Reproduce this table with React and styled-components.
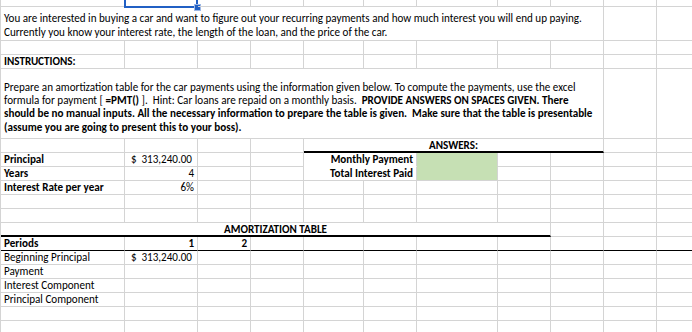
import React from "react";
import styled, { createGlobalStyle } from "styled-components";

const GRID = "#d4d4d4";
const GREEN = "#c6e0b4";
const BLUE = "#2160c4";

const Global = createGlobalStyle`
  html, body { margin: 0; padding: 0; background: #fff; overflow: hidden; }
  body { font-family: Carlito, Lato, "Liberation Sans", sans-serif; font-size: 11.1px; color: #000; }
`;

const Sheet = styled.div`
  display: grid;
  grid-template-columns: 124px 73px 53px 53px 60px 53px 81px 53px 53px 53px 53px;
  grid-template-rows: 7px 34px 14px 14px 70px repeat(14, 14px);
  width: max-content;
  border-left: 1px solid ${GRID};
`;

const bottomBorder = (p) => {
  if (p.$bottom === "thick") return "2px solid #000";
  if (p.$bottom === "thin") return "1px solid #000";
  if (p.$bottom === "hidden") return `1px solid ${p.$fill || "#fff"}`;
  return `1px solid ${GRID}`;
};

const Cell = styled.div`
  grid-column: span ${(p) => p.$span || 1};
  box-sizing: border-box;
  position: relative;
  min-width: 0;
  display: flex;
  align-items: ${(p) => (p.$valign === "center" ? "center" : "flex-end")};
  justify-content: ${(p) =>
    p.$align === "right" ? "flex-end" : p.$align === "center" ? "center" : "flex-start"};
  padding: ${(p) => p.$pad || "0 3px 0 3px"};
  border-right: 1px solid ${GRID};
  border-bottom: ${bottomBorder};
  background: ${(p) => p.$fill || "transparent"};
  font-weight: ${(p) => (p.$bold ? 700 : 400)};
  line-height: 13px;
  white-space: nowrap;
`;

const Para = styled.div`
  line-height: 13.3px;
  white-space: nowrap;
`;

const Strong = styled.span`
  font-weight: 700;
`;

const Money = styled.div`
  display: flex;
  justify-content: space-between;
  width: 100%;
  padding: 0 3px 0 3px;
`;

const Selection = styled.div`
  position: absolute;
  left: -1px;
  right: -1px;
  top: -12px;
  bottom: -2px;
  border: 2px solid ${BLUE};
  pointer-events: none;
`;

const Handle = styled.div`
  position: absolute;
  right: -5px;
  bottom: -5px;
  width: 5px;
  height: 5px;
  background: ${BLUE};
  border: 1px solid #9db8e6;
`;

const Dollar = ({ value }) => (
  <Money>
    <span>$</span>
    <span>{value}</span>
  </Money>
);

const rows = [
  // row 1 (partially visible)
  [{}, { selected: true }],
  // intro text
  [
    {
      span: 9,
      pad: "0 3px 1px 3px",
      content: (
        <Para>
          You are interested in buying a car and want to figure out your recurring payments and how
          much interest you will end up paying.
          <br />
          Currently you know your interest rate, the length of the loan, and the price of the car.
        </Para>
      ),
    },
  ],
  [],
  [{ bold: true, content: "INSTRUCTIONS:" }],
  [
    {
      span: 9,
      pad: "0 3px 4px 3px",
      content: (
        <Para>
          Prepare an amortization table for the car payments using the information given below. To
          compute the payments, use the excel
          <br />
          formula for payment [ <Strong>=PMT()</Strong> ].&nbsp; Hint: Car loans are repaid on a
          monthly basis.&nbsp; <Strong>PROVIDE ANSWERS ON SPACES GIVEN. There</Strong>
          <br />
          <Strong>
            should be no manual inputs. All the necessary information to prepare the table is
            given.&nbsp; Make sure that the table is presentable
          </Strong>
          <br />
          <Strong>(assume you are going to present this to your boss).</Strong>
        </Para>
      ),
    },
  ],
  [{}, {}, {}, {}, { span: 5, bold: true, align: "center", bottom: "thick", valign: "center", content: "ANSWERS:" }],
  [
    { bold: true, content: "Principal" },
    { pad: "0 2px 0 3px", content: <Dollar value="313,240.00" /> },
    {},
    {},
    { span: 2, bold: true, align: "right", bottom: "hidden", content: "Monthly Payment" },
    { fill: GREEN, bottom: "hidden" },
  ],
  [
    { bold: true, content: "Years" },
    { align: "right", content: "4" },
    {},
    {},
    { span: 2, bold: true, align: "right", content: "Total Interest Paid" },
    { fill: GREEN },
  ],
  [
    { bold: true, content: "Interest Rate per year" },
    { align: "right", content: "6%" },
  ],
  [],
  [],
  [{ span: 8, bold: true, align: "center", bottom: "thick", valign: "center", content: "AMORTIZATION TABLE" }],
  [
    { bold: true, bottom: "thin", content: "Periods" },
    { bold: true, bottom: "thin", align: "right", content: "1" },
    { bold: true, bottom: "thin", align: "right", content: "2" },
    ...Array.from({ length: 8 }, () => ({ bottom: "thin" })),
  ],
  [
    { content: "Beginning Principal" },
    { pad: "0 2px 0 3px", content: <Dollar value="313,240.00" /> },
  ],
  [{ content: "Payment" }],
  [{ content: "Interest Component" }],
  [{ content: "Principal Component" }],
  [],
  [],
];

const fillRow = (cells) => {
  const used = cells.reduce((n, c) => n + (c.span || 1), 0);
  return [...cells, ...Array.from({ length: Math.max(0, 11 - used) }, () => ({}))];
};

export default function App() {
  return (
    <>
      <Global />
      <Sheet>
        {rows.map((row, r) =>
          fillRow(row).map((c, i) => (
            <Cell
              key={`${r}-${i}`}
              $span={c.span}
              $bold={c.bold}
              $align={c.align}
              $valign={c.valign}
              $bottom={c.bottom}
              $fill={c.fill}
              $pad={c.pad}
            >
              {c.content}
              {c.selected && (
                <Selection>
                  <Handle />
                </Selection>
              )}
            </Cell>
          ))
        )}
      </Sheet>
    </>
  );
}
